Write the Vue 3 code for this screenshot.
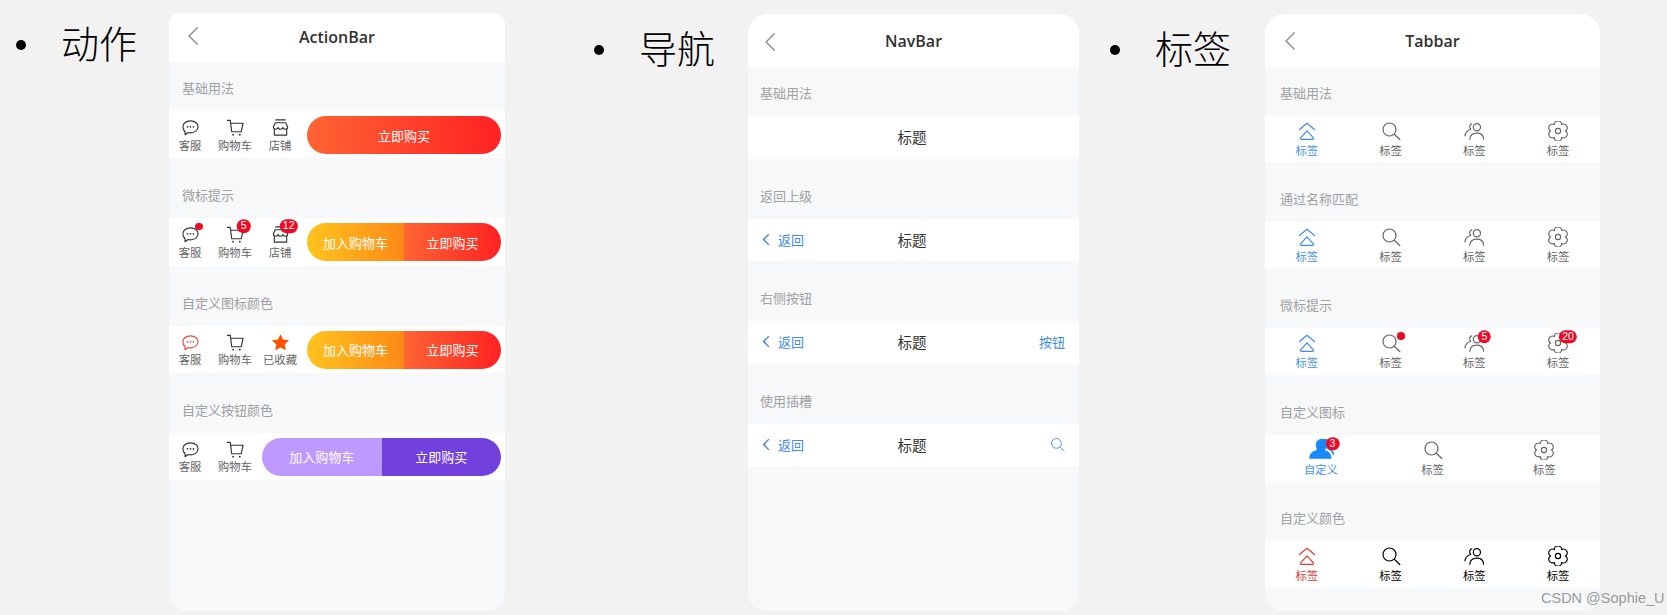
<script setup>
import { h } from 'vue'

// stroked and filled parts of each icon, in a 20x20 box
const iconPaths = {
  back: { stroke: ['M13 2.500 5.500 10l7.500 7.500'] },
  chat: {
    stroke: ['M10 3c4.400 0 8 2.700 8 6.300s-3.600 6.300-8 6.300c-.9 0-1.700-.1-2.500-.3L4.300 17.600v-3.100C2.900 13.300 2 11.400 2 9.300 2 5.700 5.600 3 10 3z'],
    fill: ['M6 9.300a.9.9 0 1 0 1.800 0 .9.9 0 1 0-1.800 0z', 'M9.100 9.300a.9.9 0 1 0 1.800 0 .9.9 0 1 0-1.800 0z', 'M12.200 9.300a.9.9 0 1 0 1.800 0 .9.9 0 1 0-1.800 0z']
  },
  cart: {
    stroke: ['M1.500 2.500H4.500L6 14.500H16L18 5.500H5'],
    fill: ['M6.500 17.500a1 1 0 1 0 2 0 1 1 0 1 0-2 0z', 'M13.500 17.500a1 1 0 1 0 2 0 1 1 0 1 0-2 0z']
  },
  shop: {
    stroke: ['M5 2h10', 'M4.500 5h11l2 4.500c0 1.500-1.200 2.300-2.500 2.300S12.500 11 12.500 9.800c0 1.200-1.200 2-2.500 2s-2.500-.8-2.500-2c0 1.200-1.200 2-2.500 2S2.500 11 2.500 9.500z', 'M3.500 11.500v6.500h13v-6.500']
  },
  star: { fill: ['M10 1.200l2.700 5.700 6.300.8-4.600 4.300 1.200 6.200L10 15.200l-5.600 3 1.200-6.200L1 7.700l6.300-.8z'] },
  home: {
    stroke: ['M2.500 8.500 10 2.300l7.500 6.200', 'M4.500 18.300h11c.9 0 1.300-1 .7-1.700L10 9.800l-6.200 6.800c-.6.700-.2 1.700.7 1.700z']
  },
  search: { stroke: ['M2 8.500a6.500 6.500 0 1 0 13 0 6.500 6.500 0 1 0-13 0z', 'M13.300 13.300 18.800 18.500'] },
  friends: {
    stroke: ['M9.300 6.200a3.600 3.600 0 1 0 7.200 0 3.600 3.600 0 1 0-7.200 0z', 'M5.800 18.300c.2-3.900 3.200-6.100 7.100-6.100s6.500 2.200 6.700 6.100', 'M7.800 2.900C5.600 3.100 4.800 6.600 6.800 8.300 3.700 9.300 1.200 11.500 1 14.800']
  },
  setting: {
    stroke: ['M17.400 10A3.600 3.600 0 0 1 13.700 16.400 3.600 3.600 0 0 1 6.300 16.400 3.600 3.600 0 0 1 2.600 10 3.600 3.600 0 0 1 6.300 3.600 3.600 3.600 0 0 1 13.700 3.600 3.600 3.600 0 0 1 17.400 10z', 'M7.400 10a2.600 2.600 0 1 0 5.200 0 2.600 2.600 0 1 0-5.200 0z']
  },
  user: {
    stroke: ['M12 2.500c3-1 5 1.200 4.500 3.800-.2 1-.7 1.800-1.300 2.500 2.300.8 4.300 2.200 4.300 4.500'],
    fill: ['M6 5.800a4.500 4.500 0 1 1 9 0c0 2-.9 3.400-2.200 4.200 3 .7 5.200 2.500 5.200 6.700H1c0-4.200 2.700-6 5.700-6.700C6.800 9.200 6 7.800 6 5.800z']
  }
}

const Icon = (props) => {
  const parts = iconPaths[props.name]
  return h('svg', { viewBox: '0 0 20 20', class: 'icon' }, [
    ...(parts.stroke || []).map((d) => h('path', { d, fill: 'none', stroke: 'currentColor', 'stroke-width': 1.200, 'stroke-linecap': 'round', 'stroke-linejoin': 'round' })),
    ...(parts.fill || []).map((d) => h('path', { d, fill: 'currentColor' }))
  ])
}
Icon.props = ['name']

const chat = { icon: 'chat', text: '客服' }
const cart = { icon: 'cart', text: '购物车' }

const actionSections = [
  {
    title: '基础用法',
    items: [chat, cart, { icon: 'shop', text: '店铺' }],
    buttons: [{ text: '立即购买', type: 'red' }]
  },
  {
    title: '微标提示',
    items: [
      { ...chat, dot: true },
      { ...cart, badge: '5' },
      { icon: 'shop', text: '店铺', badge: '12' }
    ],
    buttons: [{ text: '加入购物车', type: 'yellow' }, { text: '立即购买', type: 'red' }]
  },
  {
    title: '自定义图标颜色',
    items: [
      { ...chat, color: '#e8453c' },
      cart,
      { icon: 'star', text: '已收藏', color: '#ff5000' }
    ],
    buttons: [{ text: '加入购物车', type: 'yellow' }, { text: '立即购买', type: 'red' }]
  },
  {
    title: '自定义按钮颜色',
    items: [chat, cart],
    buttons: [{ text: '加入购物车', type: 'light-purple' }, { text: '立即购买', type: 'purple' }]
  }
]

const navSections = [
  { title: '基础用法' },
  { title: '返回上级', back: true },
  { title: '右侧按钮', back: true, right: '按钮' },
  { title: '使用插槽', back: true, search: true }
]

const tab = (icon, extra) => ({ icon, text: '标签', ...extra })
const tabSections = [
  { title: '基础用法', tabs: [tab('home', { active: true }), tab('search'), tab('friends'), tab('setting')] },
  { title: '通过名称匹配', tabs: [tab('home', { active: true }), tab('search'), tab('friends'), tab('setting')] },
  { title: '微标提示', tabs: [tab('home', { active: true }), tab('search', { dot: true }), tab('friends', { badge: '5' }), tab('setting', { badge: '20' })] },
  { title: '自定义图标', tabs: [{ icon: 'user', text: '自定义', active: true, badge: '3', wide: true }, tab('search'), tab('setting')] },
  { title: '自定义颜色', custom: true, tabs: [tab('home', { active: true }), tab('search'), tab('friends'), tab('setting')] }
]
</script>

<template>
  <div class="page">
    <section class="col col-action">
      <div class="label"><i class="bullet"></i><span>动作</span></div>
      <div class="phone">
        <header class="phone-head">
          <Icon name="back" class="head-back" />
          <span>ActionBar</span>
        </header>
        <template v-for="sec in actionSections" :key="sec.title">
          <div class="sec-title">{{ sec.title }}</div>
          <div class="action-bar">
            <div v-for="item in sec.items" :key="item.text" class="action-item">
              <span class="icon-box" :style="item.color ? { color: item.color } : null">
                <Icon :name="item.icon" />
                <i v-if="item.dot" class="dot"></i>
                <b v-if="item.badge" class="badge">{{ item.badge }}</b>
              </span>
              <span class="item-text">{{ item.text }}</span>
            </div>
            <div class="btn-group">
              <button v-for="btn in sec.buttons" :key="btn.text" class="btn" :class="btn.type">{{ btn.text }}</button>
            </div>
          </div>
        </template>
      </div>
    </section>

    <section class="col col-nav">
      <div class="label"><i class="bullet"></i><span>导航</span></div>
      <div class="phone">
        <header class="phone-head">
          <Icon name="back" class="head-back" />
          <span>NavBar</span>
        </header>
        <template v-for="sec in navSections" :key="sec.title">
          <div class="sec-title">{{ sec.title }}</div>
          <div class="nav-bar">
            <span class="nav-side">
              <template v-if="sec.back"><Icon name="back" class="nav-back" />返回</template>
            </span>
            <span class="nav-title">标题</span>
            <span class="nav-side nav-right">
              <template v-if="sec.right">{{ sec.right }}</template>
              <Icon v-if="sec.search" name="search" class="nav-search" />
            </span>
          </div>
        </template>
      </div>
    </section>

    <section class="col col-tab">
      <div class="label"><i class="bullet"></i><span>标签</span></div>
      <div class="phone">
        <header class="phone-head">
          <Icon name="back" class="head-back" />
          <span>Tabbar</span>
        </header>
        <template v-for="sec in tabSections" :key="sec.title">
          <div class="sec-title">{{ sec.title }}</div>
          <div class="tab-bar" :class="{ custom: sec.custom }">
            <div v-for="(item, i) in sec.tabs" :key="i" class="tab-item" :class="{ active: item.active }">
              <span class="icon-box tab-icon" :class="{ wide: item.wide }">
                <Icon :name="item.icon" />
                <i v-if="item.dot" class="dot"></i>
                <b v-if="item.badge" class="badge">{{ item.badge }}</b>
              </span>
              <span class="item-text">{{ item.text }}</span>
            </div>
          </div>
        </template>
      </div>
    </section>

    <span class="watermark">CSDN @Sophie_U</span>
  </div>
</template>

<style>
body { background: #f2f2f2; }
</style>

<style scoped>
.icon { display: block; width: 100%; height: 100%; }

.page {
  position: relative; display: flex; width: 1667px; height: 615px; overflow: hidden;
  background: #f2f2f2; color: #323233;
  font-family: "Open Sans", "Noto Sans CJK SC", sans-serif;
}
.col { display: flex; align-items: flex-start; }
.label {
  display: flex; align-items: center; gap: 35px; box-sizing: border-box;
  font-family: "Liberation Serif", "Noto Sans CJK SC", serif;
  font-size: 38px; font-weight: 300; line-height: 50px; color: #000;
}
.bullet { width: 10px; height: 10px; border-radius: 50%; background: #000; }

.col-action .label { width: 169px; padding: 20px 0 0 16px; }
.col-nav .label { width: 243px; padding: 25px 0 0 89px; }
.col-tab .label { width: 186px; padding: 25px 0 0 31px; }

.phone { box-sizing: border-box; margin-top: 14px; height: 597px; background: #f7f8fa; border-radius: 20px 20px 18px 18px; overflow: hidden; }
.col-action .phone { width: 336px; margin-top: 13px; height: 598px; border-radius: 11px 11px 18px 18px; }
.col-nav .phone { width: 331px; }
.col-tab .phone { width: 335px; }

.phone-head {
  position: relative; display: flex; align-items: center; justify-content: center; box-sizing: border-box;
  height: 53px; background: #fff; font-size: 16px; font-weight: 600; color: #323233;
}
.col-action .phone-head { height: 49px; padding-bottom: 2px; }
.col-nav .phone-head { padding-top: 1px; }
.head-back { position: absolute; top: 50%; width: 22px; height: 22px; margin-top: -11px; color: #8a8a8a; }
.col-action .head-back { left: 14px; margin-top: -12.500px; }
.col-nav .head-back { left: 12px; margin-top: -10px; }
.col-tab .head-back { left: 15px; }

.sec-title {
  display: flex; align-items: flex-end; box-sizing: border-box; height: 60px; padding: 0 0 14px 13px;
  font-size: 13px; line-height: 18px; color: #9fa1a3;
}
.phone-head + .sec-title { height: 49px; }
.col-nav .sec-title { padding-left: 12px; }
.col-tab .sec-title { padding-left: 15px; }

.icon-box { position: relative; display: block; width: 19px; height: 19px; margin: -1.500px 0; }
.item-text { display: block; font-size: 11.300px; line-height: 14px; margin-top: 3px; color: #646566; white-space: nowrap; }
.dot { position: absolute; top: -2.700px; right: -3px; width: 7.500px; height: 7.500px; border-radius: 50%; background: #ee0a24; }
.badge {
  position: absolute; top: 1px; right: .8px; transform: translate(50%, -50%); box-sizing: border-box;
  min-width: 13.500px; height: 13.500px; padding: 0 3px; border-radius: 7px; background: #ee0a24;
  color: #fff; font-family: "Liberation Sans", sans-serif; font-size: 10.500px; font-weight: 400; line-height: 13.500px; text-align: center;
}

.action-bar { display: flex; height: 47.300px; background: #fff; }
.action-item { flex: none; display: flex; flex-direction: column; align-items: center; width: 45px; padding-top: 8.500px; box-sizing: border-box; }
.action-item:first-child { margin-left: -1.500px; }
.btn-group { flex: 1; display: flex; height: 38px; margin: 5px 4px 0 4.500px; border-radius: 19px; overflow: hidden; }
.btn { flex: 1; border: none; padding: 0; color: #fff; font-family: inherit; font-size: 13px; }
.btn.red { background: linear-gradient(to right, #ff6434, #ff2222); }
.btn.yellow { background: linear-gradient(to right, #ffc41e, #ff8917); }
.btn.light-purple { background: #be99ff; }
.btn.purple { background: #7240dd; }

.nav-bar { display: flex; align-items: center; justify-content: space-between; box-sizing: border-box; height: 42.500px; padding: 0 14px 1px 11px; background: #fff; }
.nav-side { display: flex; align-items: center; width: 60px; font-size: 13px; color: #3f8ae6; }
.nav-right { justify-content: flex-end; }
.nav-title { font-size: 14.500px; color: #323233; }
.nav-back { width: 13px; height: 13px; margin: 0 5px 0 1px; color: #2b78dc; }
.nav-back :deep(path) { stroke-width: 2; }
.nav-search { width: 15px; height: 15px; }

.tab-bar { display: flex; height: 46.200px; background: #fff; }
.tab-item { flex: 1; display: flex; flex-direction: column; align-items: center; padding-top: 5px; box-sizing: border-box; }
.tab-icon { width: 20px; height: 20px; margin: 0; color: #646566; }
.tab-icon .dot { top: -1.200px; right: -4px; }
.tab-icon .badge { top: 3.500px; right: 0; }
.tab-icon.wide { width: 24px; color: #1989fa; }
.tab-icon.wide .icon { width: 26px; height: 26px; margin: -3px 0 0 -1px; }
.tab-icon.wide .badge { right: .3px; top: 4px; }
.tab-item.active .tab-icon { color: #3f8ae6; }
.tab-item.active .item-text { color: #4a92e8; }
.tab-item.active .tab-icon.wide { color: #1989fa; }
.tab-bar.custom .tab-icon, .tab-bar.custom .item-text { color: #000; }
.tab-bar.custom .tab-item.active .tab-icon, .tab-bar.custom .tab-item.active .item-text { color: #dd3c33; }

.watermark { position: absolute; left: 1541px; top: 589px; font-family: "Liberation Sans", sans-serif; font-size: 14.500px; line-height: 18px; color: #9a9a9a; white-space: nowrap; }
</style>
